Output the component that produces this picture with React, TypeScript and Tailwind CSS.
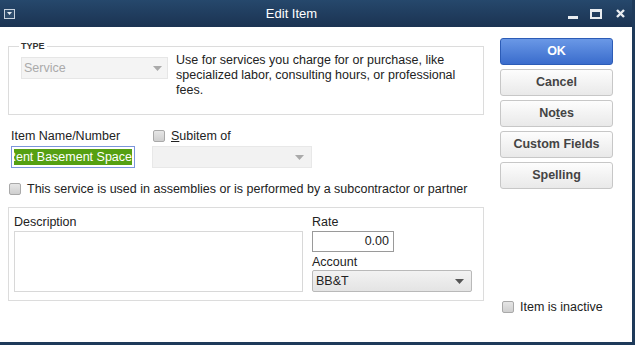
const font = { fontFamily: '"Liberation Sans", Arial, sans-serif' };

function Caret({ color = '#888' }: { color?: string }) {
  return (
    <svg width="9" height="5" viewBox="0 0 9 5">
      <path d="M0 0 H9 L4.5 5 Z" fill={color} />
    </svg>
  );
}

function Check() {
  return (
    <span className="inline-block w-[12px] h-[12px] rounded-[2px] border border-[#a9a9a9] bg-gradient-to-b from-[#e6e6e6] to-[#cfcfcf] shrink-0" />
  );
}

function Btn({ label, primary }: { label: React.ReactNode; primary?: boolean }) {
  return (
    <button
      className={`w-[113px] h-[27px] rounded-[3px] border text-[12.5px] font-bold ${
        primary
          ? 'border-[#2c5cb6] bg-gradient-to-b from-[#6a98e6] to-[#3a6ccc] text-white'
          : 'border-[#c7c7c7] bg-gradient-to-b from-[#fdfdfd] to-[#e9e9e9] text-[#444]'
      }`}
    >
      {label}
    </button>
  );
}

export default function App() {
  return (
    <div
      style={font}
      className="w-[635px] h-[345px] bg-white flex flex-col border-r-[3px] border-b-[3px] border-[#1e3a5a] text-[12.5px] text-[#222] overflow-hidden"
    >
      {/* title bar */}
      <div className="h-[27px] shrink-0 bg-gradient-to-b from-[#26486c] to-[#1b3352] flex items-center text-white">
        <div className="ml-[4px] w-[11px] h-[10px] border border-[#c9d3de] bg-[#2e4c6c] flex items-center justify-center">
          <svg width="5" height="3" viewBox="0 0 5 3">
            <path d="M0 0 H5 L2.5 3 Z" fill="#e8eef4" />
          </svg>
        </div>
        <div className="flex-1 text-center text-[13px]">Edit Item</div>
        <div className="flex items-center mr-[7px] gap-[12px]">
          <div className="w-[10px] h-[3px] bg-[#e8ecf0] mt-[8px]" />
          <div className="w-[12px] h-[10px] border-[2px] border-t-[3px] border-[#e8ecf0]" />
          <svg width="9" height="9" viewBox="0 0 9 9" className="ml-[2px]">
            <path d="M1 1 L8 8 M8 1 L1 8" stroke="#e8ecf0" strokeWidth="2.4" />
          </svg>
        </div>
      </div>

      <div className="flex flex-1">
        {/* left column */}
        <div className="ml-[8px] w-[476px] flex flex-col">
          <fieldset className="mt-[13px] h-[75px] border border-[#dcdcdc] px-[12px] pt-0 pb-0 flex items-start gap-[8px]">
            <legend className="ml-[-2px] px-[2px] text-[9px] font-bold text-[#333] leading-[12px]">TYPE</legend>
            <div className="mt-[5px] w-[147px] h-[22px] bg-[#f4f4f4] border border-[#e6e6e6] flex items-center justify-between pl-[2px] pr-[5px] text-[#aaa]">
              <span>Service</span>
              <Caret color="#aaa" />
            </div>
            <div className="mt-[1px] leading-[15px] w-[292px] text-[#222]">
              Use for services you charge for or purchase, like specialized labor, consulting hours, or professional fees.
            </div>
          </fieldset>

          <div className="mt-[14px] flex">
            <div className="ml-[3px] w-[141px] flex flex-col">
              <div className="leading-[14px]">Item Name/Number</div>
              <div className="mt-[3px] w-[124px] h-[22px] border border-[#7c96dc] p-[2px] flex overflow-hidden">
                <div className="bg-[#55a012] text-white leading-[16px] whitespace-nowrap flex justify-end w-full">
                  <span className="-ml-[16px]">Rent Basement Space</span>
                </div>
              </div>
            </div>
            <div className="flex flex-col">
              <div className="flex items-center gap-[6px] leading-[14px] ml-[1px]">
                <Check />
                <span>
                  <span className="underline">S</span>ubitem of
                </span>
              </div>
              <div className="mt-[3px] w-[160px] h-[22px] bg-[#f2f2f2] border border-[#e8e8e8] flex items-center justify-end pr-[7px]">
                <Caret color="#aaa" />
              </div>
            </div>
          </div>

          <div className="mt-[14px] ml-[1px] flex items-center gap-[6px] leading-[14px]">
            <Check />
            <span>This service is used in assemblies or is performed by a subcontractor or partner</span>
          </div>

          <div className="mt-[11px] h-[94px] border border-[#dcdcdc] flex pl-[5px] pt-[7px]">
            <div className="w-[298px] flex flex-col">
              <div className="leading-[14px]">Description</div>
              <div className="mt-[2px] w-[289px] h-[61px] border border-[#d8d8d8]" />
            </div>
            <div className="flex flex-col">
              <div className="leading-[14px]">Rate</div>
              <div className="mt-[2px] w-[82px] h-[21px] border border-[#9a9a9a] flex items-center justify-end pr-[4px]">
                0.00
              </div>
              <div className="mt-[3px] leading-[14px]">Account</div>
              <div className="mt-[1px] w-[160px] h-[22px] rounded-[2px] border border-[#b9b9b9] bg-gradient-to-b from-[#f2f2f2] to-[#e4e4e4] flex items-center justify-between pl-[3px] pr-[7px]">
                <span>BB&amp;T</span>
                <Caret color="#555" />
              </div>
            </div>
          </div>
        </div>

        {/* right column */}
        <div className="ml-[16px] mt-[11px] flex flex-col gap-[4px]">
          <Btn label="OK" primary />
          <Btn label="Cancel" />
          <Btn
            label={
              <>
                No<span className="underline">t</span>es
              </>
            }
          />
          <Btn label="Custom Fields" />
          <Btn
            label={
              <>
                Spellin<span className="underline">g</span>
              </>
            }
          />
          <div className="mt-[107px] ml-[2px] flex items-center gap-[6px] leading-[14px]">
            <Check />
            <span>Item is inactive</span>
          </div>
        </div>
      </div>
    </div>
  );
}
